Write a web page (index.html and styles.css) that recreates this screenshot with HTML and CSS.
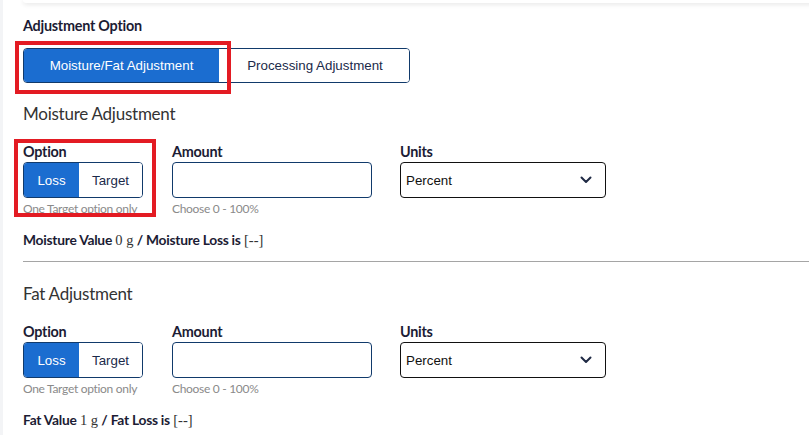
FILE: index.html
```html
<!DOCTYPE html>
<html>
<head>
<meta charset="utf-8">
<link rel="stylesheet" href="styles.css">
</head>
<body>
<div class="page">
  <div class="card-top"></div>
  <div class="content">
    <div class="field-label top-label">Adjustment Option</div>
    <div class="mode-wrap">
      <div class="mode-group">
        <button class="mode-btn active">Moisture/Fat Adjustment</button>
        <button class="mode-btn">Processing Adjustment</button>
      </div>
      <div class="annot annot-mode"></div>
    </div>

    <section class="adj first">
      <h2 class="adj-title">Moisture Adjustment</h2>
      <div class="row">
        <div class="col col-option">
          <div class="field-label">Option</div>
          <div class="seg">
            <button class="seg-btn active">Loss</button>
            <button class="seg-btn">Target</button>
          </div>
          <div class="help">One Target option only</div>
          <div class="annot annot-option"></div>
        </div>
        <div class="col col-amount">
          <div class="field-label">Amount</div>
          <div class="input"></div>
          <div class="help">Choose 0 - 100%</div>
        </div>
        <div class="col col-units">
          <div class="field-label">Units</div>
          <div class="select"><span>Percent</span>
            <svg width="12" height="8" viewBox="0 0 12 8"><path d="M1.5 1.5 L6 6 L10.5 1.5" fill="none" stroke="#1f2a44" stroke-width="2" stroke-linecap="round" stroke-linejoin="round"/></svg>
          </div>
        </div>
      </div>
      <p class="summary"><b>Moisture Value</b> <span class="val">0 g</span> <b>/ Moisture Loss is</b> <span class="val">[--]</span></p>
    </section>

    <hr class="divider">

    <section class="adj">
      <h2 class="adj-title">Fat Adjustment</h2>
      <div class="row">
        <div class="col col-option">
          <div class="field-label">Option</div>
          <div class="seg">
            <button class="seg-btn active">Loss</button>
            <button class="seg-btn">Target</button>
          </div>
          <div class="help">One Target option only</div>
        </div>
        <div class="col col-amount">
          <div class="field-label">Amount</div>
          <div class="input"></div>
          <div class="help">Choose 0 - 100%</div>
        </div>
        <div class="col col-units">
          <div class="field-label">Units</div>
          <div class="select"><span>Percent</span>
            <svg width="12" height="8" viewBox="0 0 12 8"><path d="M1.5 1.5 L6 6 L10.5 1.5" fill="none" stroke="#1f2a44" stroke-width="2" stroke-linecap="round" stroke-linejoin="round"/></svg>
          </div>
        </div>
      </div>
      <p class="summary"><b>Fat Value</b> <span class="val">1 g</span> <b>/ Fat Loss is</b> <span class="val">[--]</span></p>
    </section>
  </div>
</div>
</body>
</html>
```

FILE: styles.css
```css
* { box-sizing: border-box; }
html, body { margin: 0; padding: 0; background: #ffffff; }
body {
  font-family: Lato, "Liberation Sans", sans-serif;
  color: #1c1c34;
  overflow: hidden;
}
.page {
  border-left: 3px solid #f3f4f6;
  min-height: 435px;
  padding-left: 20px;
}
.card-top {
  height: 3px;
  margin-right: -20px;
  background: #fff;
  border-radius: 0 0 6px 6px;
  box-shadow: 0 1px 5px rgba(0,0,0,0.14);
}
.content { padding-top: 14px; }

.field-label {
  font-weight: 700;
  font-size: 14.4px;
  letter-spacing: -0.25px;
  line-height: 18px;
  color: #1c1c34;
}
.top-label { margin-bottom: 13px; }

.mode-wrap { position: relative; width: 387px; }
.mode-group {
  display: flex;
  width: 387px;
  height: 35px;
  border: 1px solid #113a6b;
  border-radius: 4px;
  overflow: hidden;
}
button {
  font-family: "Liberation Sans", Arial, sans-serif;
  font-size: 13.333px;
  border: 0;
  margin: 0;
  padding: 0;
  background: #fff;
  color: #1b2a4a;
}
.mode-btn { flex: 0 0 189px; height: 100%; }
.mode-btn.active { flex: 0 0 197px; background: #1b6dd0; color: #fff; border-right: 2px solid #fff; }
.mode-btn.active + .mode-btn { flex: 1; }

.annot {
  position: absolute;
  border: 4px solid #e31b23;
  pointer-events: none;
}
.annot-mode { left: -8px; top: -7px; width: 216px; height: 53px; }

.adj-title {
  margin: 0;
  font-weight: 400;
  font-size: 17px;
  letter-spacing: -0.25px;
  line-height: 22px;
  color: #333;
}
.adj.first .adj-title { margin-top: 20px; }
.row {
  display: flex;
  gap: 29px;
  margin-top: 18px;
}
.col { position: relative; }
.col-option { width: 120px; }
.col-amount { width: 200px; }
.col-units { width: 206px; margin-left: -1px; }
.col .field-label { margin-bottom: 1px; }

.seg {
  display: flex;
  height: 36px;
  border: 1px solid #113a6b;
  border-radius: 4px;
  overflow: hidden;
}
.seg-btn { height: 100%; }
.seg-btn.active { width: 55px; background: #1b6dd0; color: #fff; }
.seg-btn:not(.active) { flex: 1; }

.input {
  height: 36px;
  border: 1px solid #113a6b;
  border-radius: 4px;
}
.select {
  height: 36px;
  border: 1px solid #111;
  border-radius: 4px;
  display: flex;
  align-items: center;
  justify-content: space-between;
  padding: 0 13px 0 5px;
  font-family: "Liberation Sans", Arial, sans-serif;
  font-size: 13.333px;
  color: #111;
}
.help {
  margin-top: 3px;
  font-size: 12px;
  letter-spacing: -0.3px;
  line-height: 15px;
  color: #8a8a8a;
  white-space: nowrap;
}
.annot-option { left: -9px; top: -4px; width: 142px; height: 78px; }

.summary {
  margin: 15px 0 0;
  font-size: 13.8px;
  letter-spacing: -0.25px;
  line-height: 18px;
  white-space: nowrap;
}
.summary b { font-weight: 700; }
.val {
  font-family: "Liberation Serif", serif;
  font-size: 14.5px;
  letter-spacing: 0;
  color: #333;
}
.divider {
  border: 0;
  border-top: 1px solid #a5a5a5;
  margin: 12px 0 21px;
}
```
